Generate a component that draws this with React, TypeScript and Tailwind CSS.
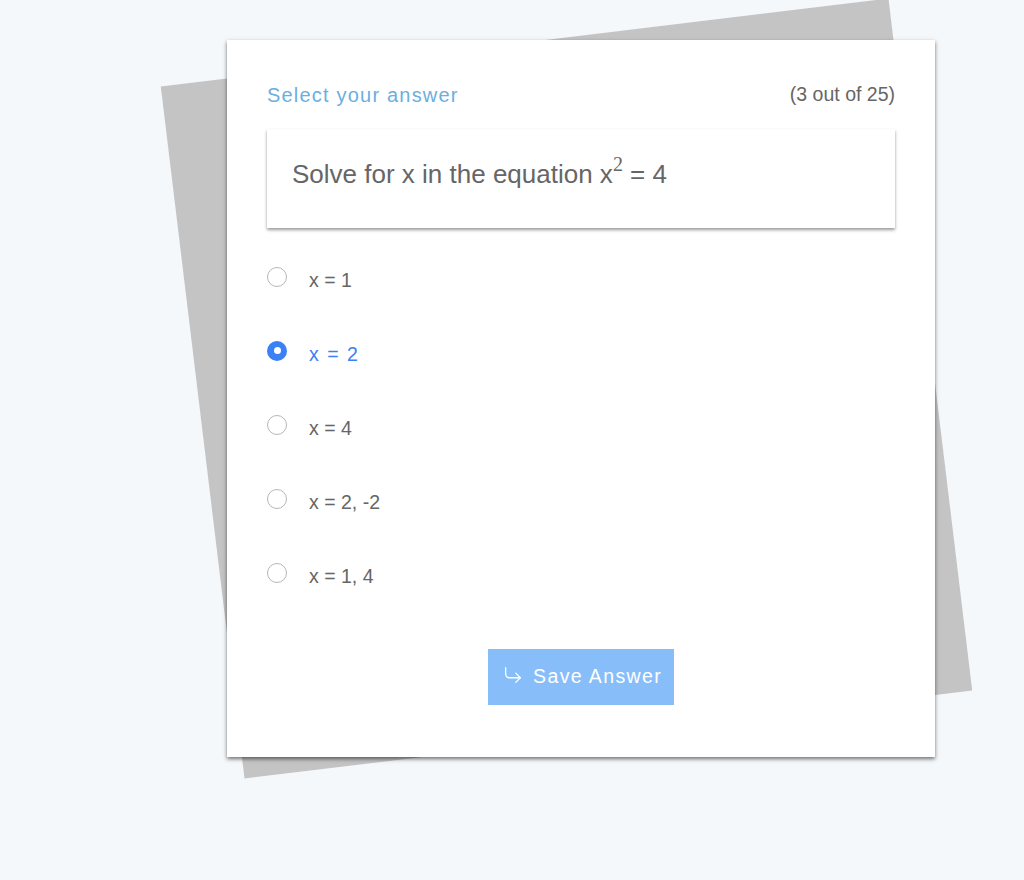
import { useState } from "react";
import { CornerDownRight } from "lucide-react";

const options = ["x = 1", "x = 2", "x = 4", "x = 2, -2", "x = 1, 4"];

function Radio({ checked }: { checked: boolean }) {
  if (checked) {
    return (
      <span className="mb-[5px] flex h-[20px] w-[20px] shrink-0 items-center justify-center rounded-full bg-[#3a80f6]">
        <span className="h-[7px] w-[7px] rounded-full bg-white" />
      </span>
    );
  }
  return <span className="mb-[5px] h-[20px] w-[20px] shrink-0 rounded-full border-[1.5px] border-[#b3b6ba] bg-white" />;
}

export default function App() {
  const [selected, setSelected] = useState(1);

  return (
    <div
      className="relative min-h-[880px] w-full overflow-hidden bg-[#f4f8fb]"
      style={{ fontFamily: '"Liberation Sans", Arial, sans-serif' }}
    >
      {/* tilted sheet behind the card */}
      <div className="absolute left-[200px] top-[40px] h-[697px] w-[733px] rotate-[-6.9deg] bg-[#c4c4c4]" />

      <div className="relative pl-[227px] pt-[40px]">
        <div className="w-[708px] bg-white px-[40px] pb-[52px] pt-[41px] shadow-[0_2px_4px_rgba(0,0,0,0.55)]">
          <div className="flex h-[28px] items-center justify-between">
            <span className="text-[20px] tracking-[1.2px] text-[#6aafdf]">Select your answer</span>
            <span className="text-[19.5px] text-[#666666]">(3 out of 25)</span>
          </div>

          <div className="mt-[20px] h-[99px] bg-white px-[25px] pt-[26px] shadow-[0_2px_3px_rgba(0,0,0,0.4)]">
            <p className="text-[26px] leading-[39px] text-[#666666]">
              Solve for x in the equation x
              <span
                className="relative top-[-12px] text-[20px]"
                style={{ fontFamily: '"Liberation Serif", "Times New Roman", serif' }}
              >
                2
              </span>{" "}
              = 4
            </p>
          </div>

          <ul className="mt-[14px]">
            {options.map((o, i) => (
              <li
                key={o}
                onClick={() => setSelected(i)}
                className="flex h-[74px] cursor-pointer items-center gap-[22px]"
              >
                <Radio checked={selected === i} />
                <span
                  className={
                    selected === i
                      ? "relative top-[2px] text-[19.5px] tracking-[1.5px] text-[#3a80f6]"
                      : "relative top-[2px] text-[19.5px] text-[#666666]"
                  }
                >
                  {o}
                </span>
              </li>
            ))}
          </ul>

          <div className="mt-[37px] flex justify-center">
            <button
              type="button"
              className="flex h-[56px] w-[186px] items-center gap-[9px] bg-[#87bef9] pl-[14px] text-white"
            >
              <CornerDownRight size={22} strokeWidth={1.4} className="mb-[5px]" />
              <span className="text-[19.5px] tracking-[1.4px]">Save Answer</span>
            </button>
          </div>
        </div>
      </div>
    </div>
  );
}
